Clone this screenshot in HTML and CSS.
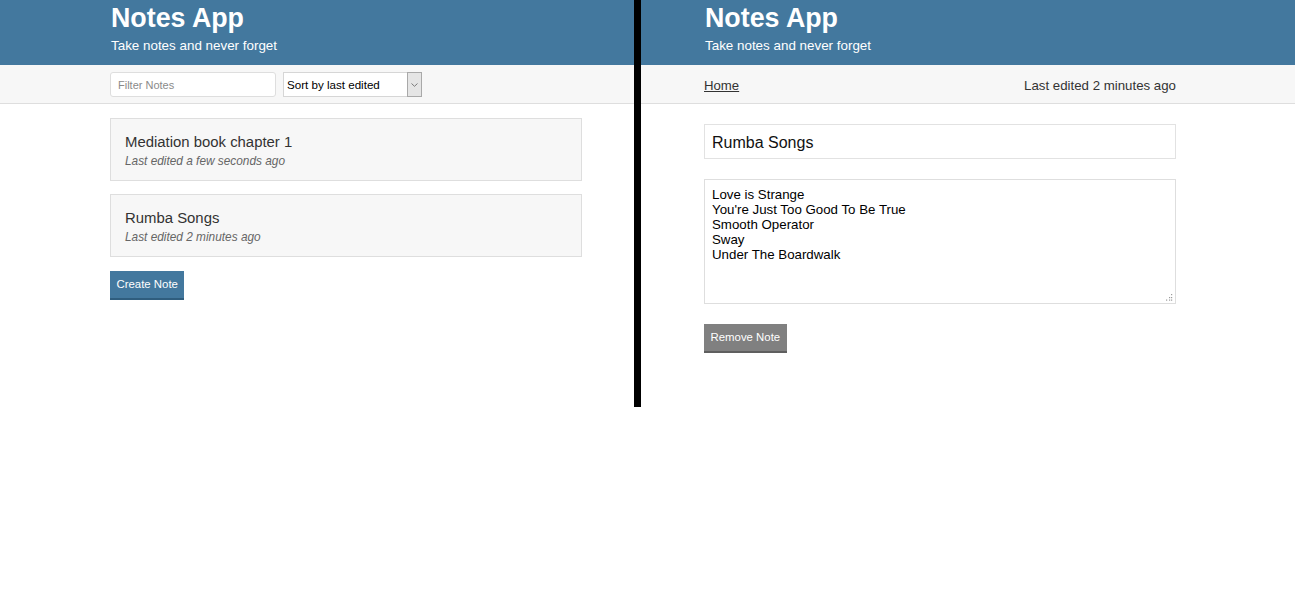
FILE: index.html
```html
<!DOCTYPE html>
<html lang="en">
<head>
<meta charset="utf-8">
<title>Notes App</title>
<link rel="stylesheet" href="styles.css">
</head>
<body>
<div class="split">
  <section class="pane pane--left">
    <header class="header">
      <div class="container">
        <h1 class="header__title">Notes App</h1>
        <p class="header__subtitle">Take notes and never forget</p>
      </div>
    </header>
    <div class="actions">
      <div class="container actions__row">
        <input class="input" type="text" placeholder="Filter Notes">
        <div class="dropdown">
          <select class="dropdown__select">
            <option>Sort by last edited</option>
            <option>Sort by recently created</option>
            <option>Sort alphabetically</option>
          </select>
          <span class="dropdown__arrow">
            <svg width="7" height="4" viewBox="0 0 7 4"><path d="M0.5 0.5 L3.5 3.3 L6.5 0.5" fill="none" stroke="#7a7a7a" stroke-width="1"/></svg>
          </span>
        </div>
      </div>
    </div>
    <div class="container notes">
      <a class="note-card" href="#">
        <p class="note-card__title">Mediation book chapter 1</p>
        <p class="note-card__meta">Last edited a few seconds ago</p>
      </a>
      <a class="note-card" href="#">
        <p class="note-card__title">Rumba Songs</p>
        <p class="note-card__meta">Last edited 2 minutes ago</p>
      </a>
      <div><button class="button">Create Note</button></div>
    </div>
  </section>
  <div class="divider"></div>
  <section class="pane pane--right">
    <header class="header">
      <div class="container">
        <h1 class="header__title">Notes App</h1>
        <p class="header__subtitle">Take notes and never forget</p>
      </div>
    </header>
    <div class="actions">
      <div class="container actions__row actions__row--spread">
        <a class="home-link" href="#">Home</a>
        <span class="last-edited">Last edited 2 minutes ago</span>
      </div>
    </div>
    <div class="container editor">
      <input class="title-input" type="text" value="Rumba Songs">
      <div class="body-wrap">
        <textarea class="body-input">Love is Strange
You're Just Too Good To Be True
Smooth Operator
Sway
Under The Boardwalk</textarea>
        <svg class="grip" width="7" height="7" viewBox="0 0 7 7">
          <rect x="5" y="0" width="1.2" height="1.2" fill="#9a9a9a"/>
          <rect x="3" y="3" width="1.2" height="1.2" fill="#9a9a9a"/>
          <rect x="5" y="3" width="1.2" height="1.2" fill="#9a9a9a"/>
          <rect x="0" y="5.5" width="1.2" height="1.2" fill="#9a9a9a"/>
          <rect x="3" y="5.5" width="1.2" height="1.2" fill="#9a9a9a"/>
          <rect x="5" y="5.5" width="1.2" height="1.2" fill="#9a9a9a"/>
        </svg>
      </div>
      <div class="editor__actions"><button class="button button--secondary">Remove Note</button></div>
    </div>
  </section>
</div>
</body>
</html>
```
FILE: styles.css
```css
* {
  box-sizing: border-box;
}

html, body {
  margin: 0;
  padding: 0;
  background: #fff;
  font-family: "Liberation Sans", Arial, sans-serif;
  color: #333;
}

.split {
  display: flex;
  height: 407px;
}

.pane {
  background: #fff;
}

.pane--left {
  width: 634px;
  flex: none;
}

.pane--right {
  flex: 1;
}

.divider {
  width: 7px;
  flex: none;
  background: #000;
}

.pane--left .container {
  margin-left: 110px;
  width: 472px;
}

.pane--right .container {
  margin-left: 63px;
  width: 472px;
}

/* Header */
.header {
  height: 65px;
  background: #43789e;
  color: #fff;
  padding-top: 3px;
}

.header__title {
  margin: 0 0 0 1px;
  font-size: 26.8px;
  line-height: 30px;
  font-weight: 700;
}

.header__subtitle {
  margin: 5px 0 0 1px;
  font-size: 13.4px;
  line-height: 16px;
}

/* Actions bar */
.actions {
  height: 39px;
  background: #f7f7f7;
  border-bottom: 1px solid #dedede;
}

.actions__row {
  display: flex;
  align-items: flex-start;
  padding-top: 7px;
  gap: 7px;
}

.actions__row--spread {
  height: 38px;
  padding-top: 3px;
  align-items: center;
  justify-content: space-between;
}

.input {
  width: 166px;
  height: 25px;
  border: 1px solid #dedede;
  border-radius: 3px;
  background: #fff;
  padding: 0 7px;
  font-family: "Liberation Sans", Arial, sans-serif;
  font-size: 11px;
  color: #333;
  outline: none;
}

.input::placeholder {
  color: #8a8a8a;
}

.dropdown {
  position: relative;
  width: 139px;
  height: 25px;
}

.dropdown__select {
  -webkit-appearance: none;
  appearance: none;
  width: 100%;
  height: 25px;
  border: 1px solid #d6d6d6;
  border-radius: 0;
  background: #fff;
  padding: 0 18px 0 3px;
  font-family: "Liberation Sans", Arial, sans-serif;
  font-size: 11.6px;
  color: #000;
  outline: none;
}

.dropdown__arrow {
  position: absolute;
  top: 0;
  right: 0;
  width: 15px;
  height: 25px;
  background: #e5e5e5;
  border: 1px solid #a9a9a9;
  display: flex;
  align-items: center;
  justify-content: center;
  pointer-events: none;
}

.dropdown__arrow svg {
  display: block;
}

/* Notes list */
.notes {
  padding-top: 14px;
  display: flex;
  flex-direction: column;
  gap: 13px;
}

.note-card {
  display: block;
  background: #f7f7f7;
  border: 1px solid #dedede;
  padding: 14px 14px 12px;
  text-decoration: none;
  color: #333;
}

.note-card p {
  margin: 0;
}

.note-card__title {
  font-size: 14.9px;
  line-height: 18px;
  color: #333;
}

.note-card .note-card__meta {
  margin-top: 3px;
  font-size: 11.85px;
  line-height: 14px;
  font-style: italic;
  color: #666;
}

.notes > div {
  margin-top: 1px;
}

/* Buttons */
.button {
  display: inline-block;
  height: 29px;
  line-height: 27px;
  padding: 0 6.5px;
  margin: 0;
  border: none;
  border-bottom: 2px solid #2f5d7e;
  background: #43789e;
  color: #fff;
  font-family: "Liberation Sans", Arial, sans-serif;
  font-size: 11.4px;
  cursor: pointer;
}

.button--secondary {
  background: #808080;
  border-bottom-color: #5f5f5f;
}

/* Right pane */
.home-link {
  color: #333;
  font-size: 13.2px;
  line-height: 16px;
  text-decoration: underline;
}

.last-edited {
  font-size: 13.27px;
  line-height: 16px;
  color: #333;
}

.editor {
  padding-top: 20px;
  display: flex;
  flex-direction: column;
}

.title-input {
  display: block;
  width: 100%;
  height: 35px;
  border: 1px solid #e2e2e2;
  padding: 2px 7px 0;
  font-family: "Liberation Sans", Arial, sans-serif;
  font-size: 16px;
  color: #111;
  outline: none;
  background: #fff;
}

.body-wrap {
  position: relative;
  margin-top: 20px;
}

.body-input {
  display: block;
  width: 100%;
  height: 125px;
  border: 1px solid #dedede;
  padding: 7px 7px;
  font-family: "Liberation Sans", Arial, sans-serif;
  font-size: 13.3px;
  line-height: 15px;
  color: #000;
  resize: none;
  outline: none;
}

.grip {
  position: absolute;
  right: 3px;
  bottom: 3px;
  display: block;
}

.editor__actions {
  margin-top: 20px;
}
```
